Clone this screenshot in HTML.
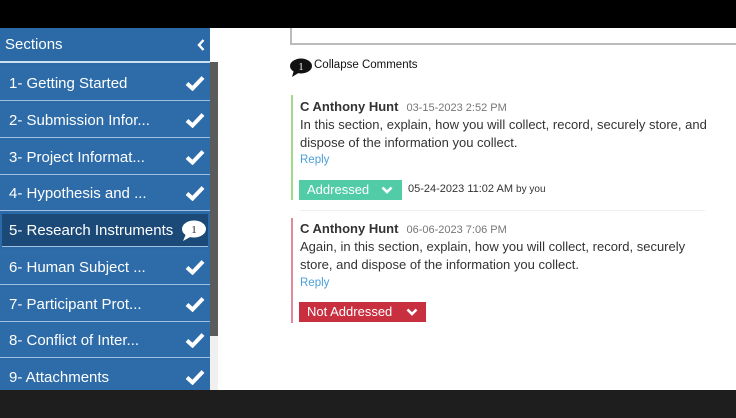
<!DOCTYPE html>
<html><head><meta charset="utf-8"><style>
*{margin:0;padding:0;box-sizing:border-box}
body{width:736px;height:418px;overflow:hidden;background:#fff;font-family:"Liberation Sans",sans-serif;position:relative}
.abs{position:absolute}
.top{left:0;top:0;width:736px;height:28px;background:#000}
.bot{left:0;top:390px;width:736px;height:28px;background:#1e1e1e}
.side{left:0;top:28px;width:210px;height:362px;background:#2b6aa6}
.hdr{left:0;top:28px;width:210px;height:35px;color:#fff;font-size:15px;line-height:34px;padding-left:5px;border-bottom:2px solid #cfe0f0}
.item{left:0;width:210px;height:35px;color:#fff;font-size:15px;line-height:35px;padding-left:9px;border-bottom:1px solid #9fc0e0;background:#2d6ca8}
.item.act{background:#1b4a78;left:2px;width:206px;padding-left:7px;height:33px;line-height:33px}
.chk{position:absolute;right:5px;top:9px}
.scroll{left:210px;top:62px;width:8px;height:274px;background:#5b5b5b}
.scroll2{left:210px;top:336px;width:8px;height:54px;background:#f0f0f0}
.t{color:#333;font-size:13px}
.name{font-size:13px;font-weight:bold;color:#333}
.date{font-size:11px;color:#777;margin-left:8px;font-weight:normal}
.reply{color:#4a9fd8;font-size:11.5px}
.btn{color:#fff;font-size:13px;line-height:20px;padding-left:8px}
</style></head><body>
<div class="abs top"></div>
<div class="abs side"></div>
<div class="abs hdr">Sections<svg class="abs" style="left:197px;top:11px" width="8" height="12" viewBox="0 0 8 12"><path d="M6.5 1L2 6l4.5 5" stroke="#fff" stroke-width="2.4" fill="none"/></svg></div>
<div class="abs scroll"></div><div class="abs scroll2"></div>

<div class="abs item" style="top:66px">1- Getting Started<svg class="chk" width="20" height="16" viewBox="0 0 20 16"><path d="M2 8.5l5.5 5L18 2.5" stroke="#fff" stroke-width="4" fill="none"/></svg></div>
<div class="abs item" style="top:103px">2- Submission Infor...<svg class="chk" width="20" height="16" viewBox="0 0 20 16"><path d="M2 8.5l5.5 5L18 2.5" stroke="#fff" stroke-width="4" fill="none"/></svg></div>
<div class="abs item" style="top:140px">3- Project Informat...<svg class="chk" width="20" height="16" viewBox="0 0 20 16"><path d="M2 8.5l5.5 5L18 2.5" stroke="#fff" stroke-width="4" fill="none"/></svg></div>
<div class="abs item" style="top:176px">4- Hypothesis and ...<svg class="chk" width="20" height="16" viewBox="0 0 20 16"><path d="M2 8.5l5.5 5L18 2.5" stroke="#fff" stroke-width="4" fill="none"/></svg></div>
<div class="abs item act" style="top:214px">5- Research Instruments<svg class="abs" style="left:176px;top:6px" width="30" height="22" viewBox="0 0 30 22"><ellipse cx="16" cy="9" rx="12" ry="8.5" fill="#fff"/><path d="M8 14L5 21l9-5z" fill="#fff"/><text x="16" y="13" font-size="11" text-anchor="middle" fill="#222" font-family="Liberation Serif">1</text></svg></div>
<div class="abs item" style="top:250px">6- Human Subject ...<svg class="chk" width="20" height="16" viewBox="0 0 20 16"><path d="M2 8.5l5.5 5L18 2.5" stroke="#fff" stroke-width="4" fill="none"/></svg></div>
<div class="abs item" style="top:287px">7- Participant Prot...<svg class="chk" width="20" height="16" viewBox="0 0 20 16"><path d="M2 8.5l5.5 5L18 2.5" stroke="#fff" stroke-width="4" fill="none"/></svg></div>
<div class="abs item" style="top:323px">8- Conflict of Inter...<svg class="chk" width="20" height="16" viewBox="0 0 20 16"><path d="M2 8.5l5.5 5L18 2.5" stroke="#fff" stroke-width="4" fill="none"/></svg></div>
<div class="abs item" style="top:360px;border:none">9- Attachments<svg class="chk" width="20" height="16" viewBox="0 0 20 16"><path d="M2 8.5l5.5 5L18 2.5" stroke="#fff" stroke-width="4" fill="none"/></svg></div>

<div class="abs bot"></div>

<div class="abs" style="left:290px;top:28px;width:446px;height:17px;border-left:2px solid #bbb;border-bottom:2px solid #bbb"></div>

<svg class="abs" style="left:289px;top:58px" width="24" height="20" viewBox="0 0 24 20"><ellipse cx="12" cy="8" rx="11" ry="7.5" fill="#111"/><path d="M5 12L3 19l8-5z" fill="#111"/><text x="12" y="12" font-size="10" text-anchor="middle" fill="#fff" font-family="Liberation Serif">1</text></svg>
<div class="abs" style="left:314px;top:59px;font-size:11.5px;color:#111">Collapse Comments</div>

<div class="abs" style="left:291px;top:95px;width:2px;height:105px;background:#9edc8a"></div>
<div class="abs name" style="left:300px;top:99px">C Anthony Hunt<span class="date">03-15-2023 2:52 PM</span></div>
<div class="abs t" style="left:300px;top:116px;line-height:18px;width:420px">In this section, explain, how you will collect, record, securely store, and dispose of the information you collect.</div>
<div class="abs reply" style="left:300px;top:154px">Reply</div>
<div class="abs btn" style="left:299px;top:180px;width:103px;background:#52cca6">Addressed<svg class="abs" style="left:82px;top:6px" width="12" height="9" viewBox="0 0 12 9"><path d="M1.5 1.5L6 6l4.5-4.5" stroke="#fff" stroke-width="2.6" fill="none"/></svg></div>
<div class="abs" style="left:408px;top:183px;font-size:11px;color:#333">05-24-2023 11:02 AM <span style="font-size:10px">by you</span></div>
<div class="abs" style="left:300px;top:210px;width:405px;height:1px;background:#eee"></div>

<div class="abs" style="left:291px;top:218px;width:2px;height:105px;background:#e08a9a"></div>
<div class="abs name" style="left:300px;top:221px">C Anthony Hunt<span class="date">06-06-2023 7:06 PM</span></div>
<div class="abs t" style="left:300px;top:238px;line-height:18px;width:420px">Again, in this section, explain, how you will collect, record, securely store, and dispose of the information you collect.</div>
<div class="abs reply" style="left:300px;top:277px">Reply</div>
<div class="abs btn" style="left:299px;top:302px;width:127px;background:#c8303f">Not Addressed<svg class="abs" style="left:107px;top:6px" width="12" height="9" viewBox="0 0 12 9"><path d="M1.5 1.5L6 6l4.5-4.5" stroke="#fff" stroke-width="2.6" fill="none"/></svg></div>
</body></html>
